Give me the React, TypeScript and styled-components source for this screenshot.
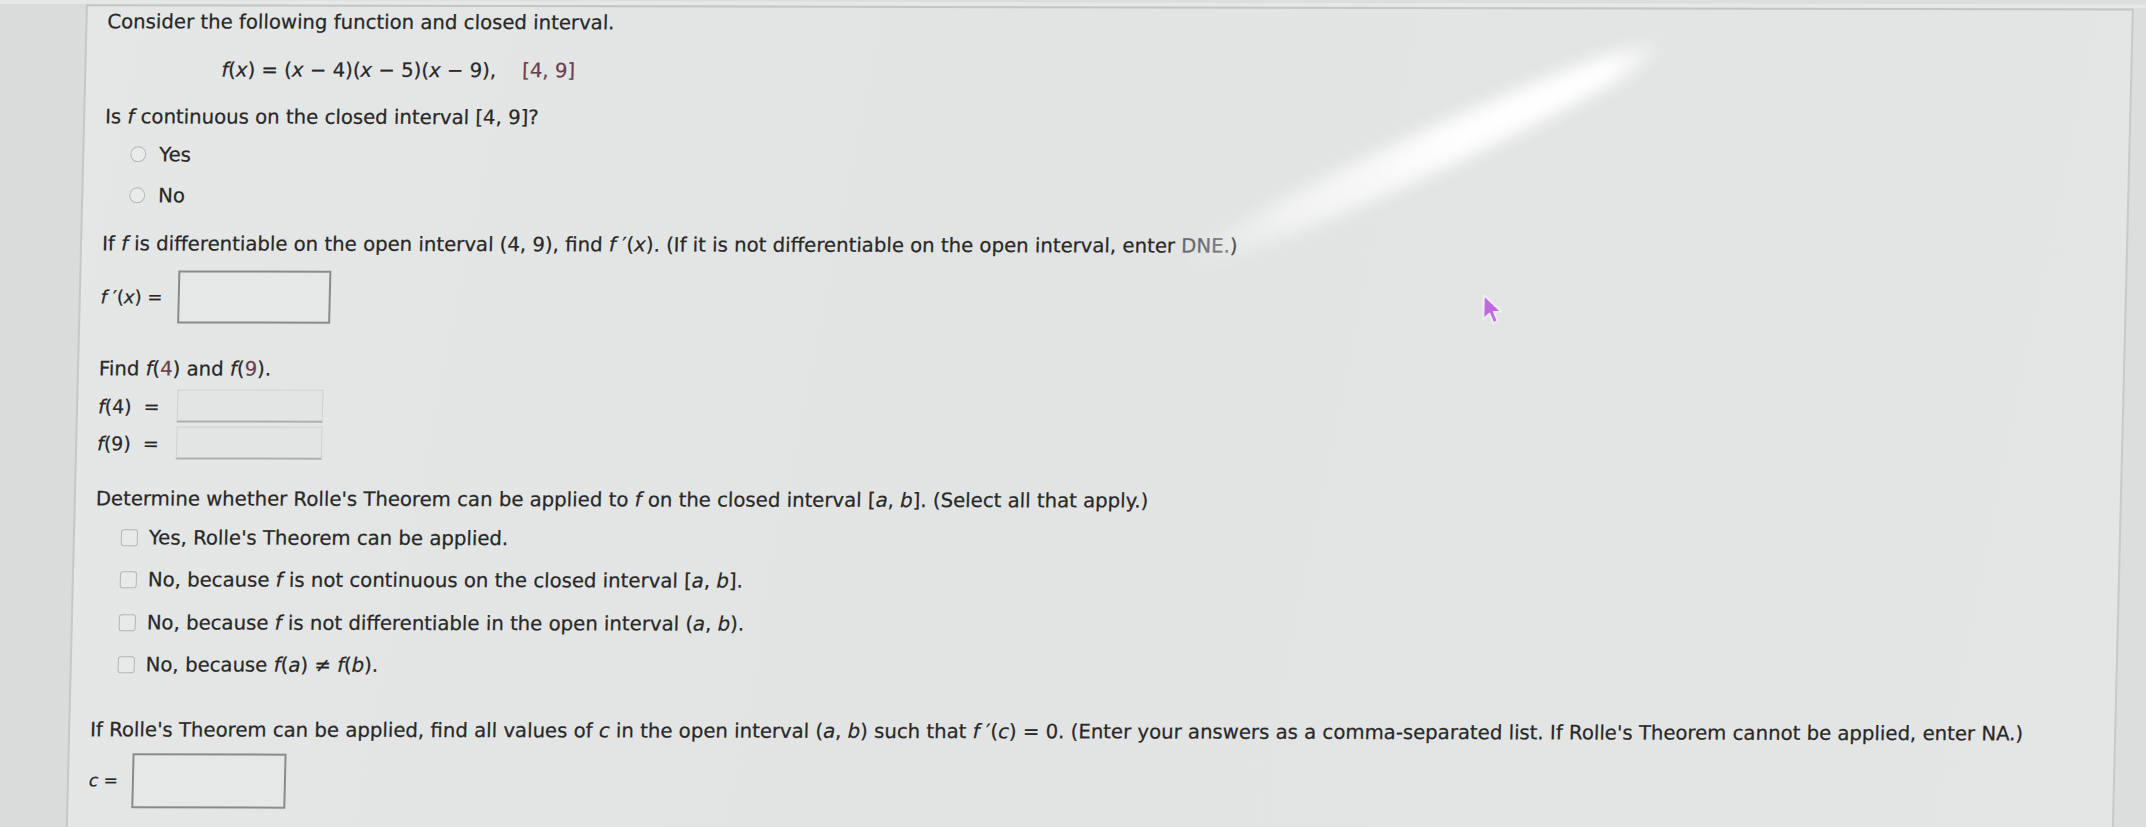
import styled, { createGlobalStyle } from "styled-components";

const GlobalStyle = createGlobalStyle`
  html, body {
    margin: 0;
    padding: 0;
    width: 2146px;
    height: 827px;
    overflow: hidden;
    background: #dcdedd;
  }
  body {
    font-family: "DejaVu Sans", Verdana, sans-serif;
    color: #282828;
    -webkit-text-stroke: 0.25px #282828;
  }
`;

const Screen = styled.div`
  width: 2200px;
  height: 860px;
  display: flex;
  flex-direction: column;
  transform: skew(-1.4deg, 0.12deg);
  transform-origin: 0 0;
`;

const TopStrip = styled.div`
  height: 4px;
  background: #e6e8e7;
`;

const Row = styled.div`
  flex: 1;
  display: flex;
`;

const Gutter = styled.div`
  width: 86px;
  background: #dadcdb;
`;

const Panel = styled.div`
  position: relative;
  width: 2024px;
  background: linear-gradient(100deg, #e5e7e6 0%, #e2e4e3 45%, #e4e6e5 100%);
  border-top: 2px solid #c4c6c5;
  border-left: 2px solid #c6c8c7;
  border-right: 2px solid #c8cac9;
  padding: 4px 0 0 20px;
  overflow: hidden;
`;

const RightStrip = styled.div`
  flex: 1;
  background: #dcdedd;
`;

const Prompt = styled.p<{ $mt: number }>`
  margin: ${(p) => p.$mt}px 0 0;
  font-size: 19.7px;
  line-height: 24px;
  white-space: nowrap;
`;

const Formula = styled(Prompt)`
  padding-left: 115px;
`;

const Var = styled.i`
  font-style: italic;
`;

const Num = styled.span`
  color: #6c3f50;
  -webkit-text-stroke-color: #6c3f50;
`;

const Hint = styled.span`
  color: #64666a;
  -webkit-text-stroke-color: #64666a;
`;

const Gap = styled.span`
  display: inline-block;
  width: 26px;
`;

const OptionList = styled.div<{ $mt: number; $gap: number }>`
  margin-top: ${(p) => p.$mt}px;
  display: flex;
  flex-direction: column;
  gap: ${(p) => p.$gap}px;
  padding-left: 26px;
`;

const Option = styled.label<{ $gap: number }>`
  display: flex;
  align-items: center;
  gap: ${(p) => p.$gap}px;
  height: 24px;
  font-size: 19.7px;
  white-space: nowrap;
`;

const Radio = styled.span`
  width: 16px;
  height: 16px;
  box-sizing: border-box;
  border-radius: 50%;
  border: 1.5px solid #b3b5b4;
  background: #e9ebea;
`;

const Check = styled.span`
  width: 17px;
  height: 17px;
  box-sizing: border-box;
  border-radius: 3px;
  border: 1.5px solid #b3b5b4;
  background: #e8eae9;
`;

const AnswerRow = styled.div<{ $mt: number; $label: number }>`
  margin-top: ${(p) => p.$mt}px;
  display: grid;
  grid-template-columns: ${(p) => p.$label}px auto;
  align-items: center;
  justify-content: start;
`;

const AnswerLabel = styled.span<{ $size: number }>`
  font-size: ${(p) => p.$size}px;
  white-space: nowrap;
`;

const Eq = styled.span`
  margin-left: 12px;
`;

const Box = styled.div<{ $w: number; $h: number; $faint?: boolean }>`
  width: ${(p) => p.$w}px;
  height: ${(p) => p.$h}px;
  box-sizing: border-box;
  background: ${(p) => (p.$faint ? "#e3e5e4" : "#e6e8e7")};
  border: ${(p) => (p.$faint ? "1px solid #d0d2d1" : "2px solid #898b8a")};
  border-bottom: ${(p) => (p.$faint ? "2px solid #aeb0af" : "2px solid #898b8a")};
`;

const Glare = styled.div`
  position: absolute;
  left: 1075px;
  top: 124px;
  width: 530px;
  height: 42px;
  border-radius: 50%;
  background: linear-gradient(
    to right,
    rgba(255, 255, 255, 0) 0%,
    rgba(255, 255, 255, 0.5) 22%,
    rgba(255, 255, 255, 0.95) 55%,
    rgba(255, 255, 255, 1) 88%,
    rgba(255, 255, 255, 0) 100%
  );
  filter: blur(8px);
  transform: rotate(-25deg);
  pointer-events: none;
`;

const Cursor = styled.svg`
  position: absolute;
  left: 1400px;
  top: 284px;
  width: 24px;
  height: 34px;
`;

export default function App() {
  return (
    <>
      <GlobalStyle />
      <Screen>
        <TopStrip />
        <Row>
          <Gutter />
          <Panel>
            <Prompt $mt={0}>Consider the following function and closed interval.</Prompt>
            <Formula $mt={24}>
              <Var>f</Var>(<Var>x</Var>) = (<Var>x</Var> − 4)(<Var>x</Var> − 5)(<Var>x</Var> − 9),
              <Gap />
              <Num>[4, 9]</Num>
            </Formula>
            <Prompt $mt={23}>
              Is <Var>f</Var> continuous on the closed interval [4, 9]?
            </Prompt>
            <OptionList $mt={13} $gap={17}>
              <Option $gap={13}>
                <Radio />
                Yes
              </Option>
              <Option $gap={13}>
                <Radio />
                No
              </Option>
            </OptionList>

            <Prompt $mt={25}>
              If <Var>f</Var> is differentiable on the open interval (4, 9), find <Var>f</Var> ′(<Var>x</Var>). (If it is
              not differentiable on the open interval, enter <Hint>DNE.</Hint>)
            </Prompt>
            <AnswerRow $mt={14} $label={77}>
              <AnswerLabel $size={18}>
                <Var>f</Var> ′(<Var>x</Var>) =
              </AnswerLabel>
              <Box $w={153} $h={53} />
            </AnswerRow>

            <Prompt $mt={34}>
              Find <Var>f</Var>(<Num>4</Num>) and <Var>f</Var>(<Num>9</Num>).
            </Prompt>
            <AnswerRow $mt={8} $label={79}>
              <AnswerLabel $size={19}>
                <Var>f</Var>(4)<Eq>=</Eq>
              </AnswerLabel>
              <Box $w={146} $h={33} $faint />
            </AnswerRow>
            <AnswerRow $mt={4} $label={79}>
              <AnswerLabel $size={19}>
                <Var>f</Var>(9)<Eq>=</Eq>
              </AnswerLabel>
              <Box $w={146} $h={33} $faint />
            </AnswerRow>

            <Prompt $mt={28}>
              Determine whether Rolle's Theorem can be applied to <Var>f</Var> on the closed interval [<Var>a</Var>,{" "}
              <Var>b</Var>]. (Select all that apply.)
            </Prompt>
            <OptionList $mt={14} $gap={18.5}>
              <Option $gap={11}>
                <Check />
                Yes, Rolle's Theorem can be applied.
              </Option>
              <Option $gap={11}>
                <Check />
                <span>
                  No, because <Var>f</Var> is not continuous on the closed interval [<Var>a</Var>, <Var>b</Var>].
                </span>
              </Option>
              <Option $gap={11}>
                <Check />
                <span>
                  No, because <Var>f</Var> is not differentiable in the open interval (<Var>a</Var>, <Var>b</Var>).
                </span>
              </Option>
              <Option $gap={11}>
                <Check />
                <span>
                  No, because <Var>f</Var>(<Var>a</Var>) ≠ <Var>f</Var>(<Var>b</Var>).
                </span>
              </Option>
            </OptionList>

            <Prompt $mt={41}>
              If Rolle's Theorem can be applied, find all values of <Var>c</Var> in the open interval (<Var>a</Var>,{" "}
              <Var>b</Var>) such that <Var>f</Var> ′(<Var>c</Var>) = 0. (Enter your answers as a comma-separated list. If
              Rolle's Theorem cannot be applied, enter NA.)
            </Prompt>
            <AnswerRow $mt={11} $label={43}>
              <AnswerLabel $size={17}>
                <Var>c</Var> =
              </AnswerLabel>
              <Box $w={154} $h={55} />
            </AnswerRow>

            <Glare />
            <Cursor viewBox="0 0 24 34">
              <path
                d="M3 2 L3 26 L9 20.5 L13 30 L17.5 28 L13.5 18.8 L21 18.5 Z"
                fill="#c567e3"
                stroke="#eceef0"
                strokeWidth="2"
                strokeLinejoin="round"
              />
            </Cursor>
          </Panel>
          <RightStrip />
        </Row>
      </Screen>
    </>
  );
}
